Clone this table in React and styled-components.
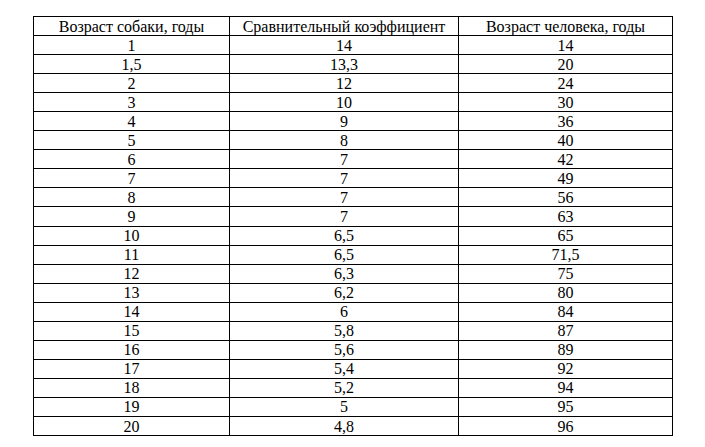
import React from "react";
import { styled, createGlobalStyle } from "styled-components";

const rows = [
  ["1", "14", "14"],
  ["1,5", "13,3", "20"],
  ["2", "12", "24"],
  ["3", "10", "30"],
  ["4", "9", "36"],
  ["5", "8", "40"],
  ["6", "7", "42"],
  ["7", "7", "49"],
  ["8", "7", "56"],
  ["9", "7", "63"],
  ["10", "6,5", "65"],
  ["11", "6,5", "71,5"],
  ["12", "6,3", "75"],
  ["13", "6,2", "80"],
  ["14", "6", "84"],
  ["15", "5,8", "87"],
  ["16", "5,6", "89"],
  ["17", "5,4", "92"],
  ["18", "5,2", "94"],
  ["19", "5", "95"],
  ["20", "4,8", "96"],
];

const GlobalStyle = createGlobalStyle`
  html, body {
    margin: 0;
    padding: 0;
    background: #ffffff;
  }
`;

const Page = styled.div`
  padding: 16px 0 0 33px;
  font-family: "Liberation Serif", "Times New Roman", serif;
  color: #000000;
`;

const Table = styled.table`
  border-collapse: collapse;
  table-layout: fixed;
  width: 639px;
  font-size: 16px;
`;

const Col = styled.col`
  width: ${(p) => p.$w}px;
`;

const Row = styled.tr`
  height: 19.05px;
`;

const HeadCell = styled.th`
  border: 1px solid #000000;
  padding: 0;
  font-weight: normal;
  text-align: center;
  line-height: 17px;
  white-space: nowrap;
`;

const Cell = styled.td`
  border: 1px solid #000000;
  padding: 0;
  text-align: center;
  line-height: 17px;
`;

const App = () => {
  return (
    <Page>
      <GlobalStyle />
      <Table>
        <colgroup>
          <Col $w={196} />
          <Col $w={229} />
          <Col $w={214} />
        </colgroup>
        <thead>
          <Row>
            <HeadCell>Возраст собаки, годы</HeadCell>
            <HeadCell>Сравнительный коэффициент</HeadCell>
            <HeadCell>Возраст человека, годы</HeadCell>
          </Row>
        </thead>
        <tbody>
          {rows.map((r) => (
            <Row key={r[0]}>
              <Cell>{r[0]}</Cell>
              <Cell>{r[1]}</Cell>
              <Cell>{r[2]}</Cell>
            </Row>
          ))}
        </tbody>
      </Table>
    </Page>
  );
};

export default App;
